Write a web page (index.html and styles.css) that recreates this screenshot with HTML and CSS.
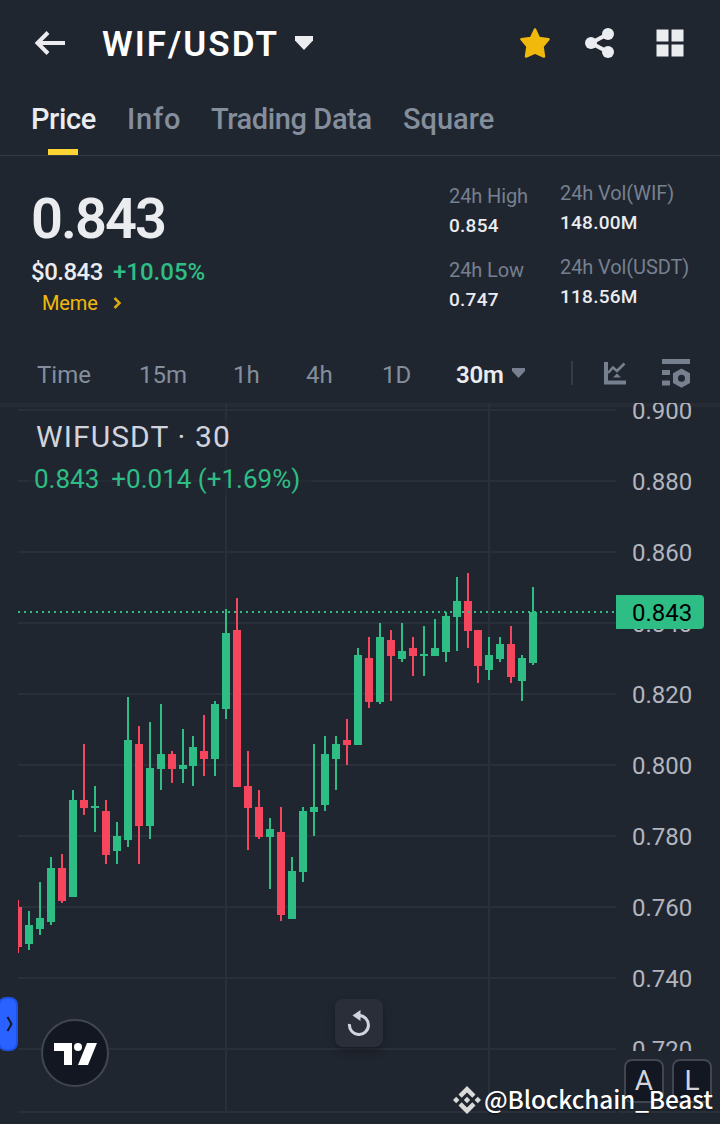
FILE: index.html
```html
<!DOCTYPE html>
<html lang="en">
<head>
    <meta charset="UTF-8">
    <meta name="viewport" content="width=device-width, initial-scale=1.0">
    <title>WIF/USDT</title>
    <link rel="stylesheet" href="styles.css">
</head>
<body>
    <header class="header">
        <svg class="back" width="32" height="26" viewBox="0 0 32 26">
            <path d="M31 13H4M14 2.500L3.500 13L14 23.500" fill="none" stroke="#eaecef" stroke-width="4"/>
        </svg>
        <h1 class="pair">WIF/USDT</h1>
        <svg class="pairCaret" width="18" height="14" viewBox="0 0 18 14"><path d="M0 0h18v4.500L9 14L0 4.500z" fill="#eaecef"/></svg>
        <div class="actions">
            <svg width="30" height="30" viewBox="0 0 30 30">
                <path d="M15 1.500L19 10L28.500 11.300L22.500 18.500L24 28.500L15 24.500L6 28.500L7.500 18.500L1.500 11.300L11 10z" fill="#f0b90b" stroke="#f0b90b" stroke-width="2.500" stroke-linejoin="round"/>
            </svg>
            <svg width="30" height="30" viewBox="0 0 30 30" fill="#eaecef">
                <path d="M23 6L6 15L23 24" fill="none" stroke="#eaecef" stroke-width="4"/>
                <circle cx="6" cy="15" r="6"/>
                <circle cx="23" cy="6" r="6"/>
                <circle cx="23" cy="24" r="6"/>
            </svg>
            <svg width="28" height="28" viewBox="0 0 28 28" fill="#eaecef">
                <path d="M.5.5h12v12h-12zM15.500.5h12v12h-12zM.5 15.500h12v12h-12zM15.500 15.500h12v12h-12z"/>
            </svg>
        </div>
    </header>

    <nav class="tabs">
        <a class="tab active tabPrice">Price</a>
        <a class="tab tabInfo">Info</a>
        <a class="tab tabData">Trading Data</a>
        <a class="tab tabSquare">Square</a>
    </nav>

    <section class="summary">
        <div class="priceBox">
            <div class="price">0.843</div>
            <div class="change"><span class="usd">$0.843</span><span class="percent">+10.05%</span></div>
            <div class="tag">Meme
                <svg width="9" height="12" viewBox="0 0 9 12"><path d="M1.500 1L6.500 6L1.500 11" fill="none" stroke="#d9a90f" stroke-width="2.500"/></svg>
            </div>
        </div>
        <dl class="stats">
            <dt>24h High</dt><dd>0.854</dd>
            <dt>24h Low</dt><dd>0.747</dd>
        </dl>
        <dl class="stats volume">
            <dt>24h Vol(WIF)</dt><dd>148.00M</dd>
            <dt>24h Vol(USDT)</dt><dd>118.56M</dd>
        </dl>
    </section>

    <div class="intervals">
        <span>Time</span>
        <span>15m</span>
        <span>1h</span>
        <span>4h</span>
        <span>1D</span>
        <span class="current">30m
            <svg width="13" height="10" viewBox="0 0 13 10"><path d="M0 0h13v3L6.500 10L0 3z" fill="#76808f"/></svg>
        </span>
        <i class="divider"></i>
        <svg class="tool" width="22" height="23" viewBox="0 0 22 23">
            <path d="M2 0V20.500H22" fill="none" stroke="#76808f" stroke-width="4"/>
            <path d="M4 11L9 5.500L13 9L20.500 1.500" fill="none" stroke="#76808f" stroke-width="2.600"/>
            <path d="M9 15.500L13 11.500L17 15.500z" fill="#76808f"/>
        </svg>
        <svg class="tool" width="28" height="29" viewBox="0 0 28 29" fill="#76808f">
            <path d="M0 0h28v5H0zM0 11h8v5H0zM0 21.500h8v5H0z"/>
            <path d="M19.500 9.500L28 14.200V24L19.500 28.800L11 24V14.200zM19.500 15.700a3.500 3.500 0 1 0 0 7a3.500 3.500 0 1 0 0-7z" fill-rule="evenodd"/>
        </svg>
    </div>

    <main class="chart">
        <svg class="plot" width="720" height="721" viewBox="0 403 720 721">
            <rect y="403" width="720" height="4" fill="#262b35"/>
            <clipPath id="pane"><rect x="18" y="403" width="598" height="709"/></clipPath>
            <clipPath id="axisPane"><rect x="616" y="403" width="104" height="648"/></clipPath>
            <g id="grid" fill="#2a303a"></g>
            <g id="axis" clip-path="url(#axisPane)"></g>
            <rect class="legendShade" x="26" y="418" width="286" height="78"/>
            <g id="candles" clip-path="url(#pane)"></g>
            <path d="M18 612H616" stroke="#2ebd85" stroke-width="2" stroke-dasharray="2 4"/>
            <path d="M616 595h84a4 4 0 0 1 4 4v26a4 4 0 0 1-4 4h-84z" fill="#2ebd85"/>
            <text class="axisText lastPrice" x="632" y="621">0.843</text>
        </svg>

        <div class="legend">
            <div class="symbol">WIFUSDT · 30</div>
            <div class="values"><span>0.843</span><span>+0.014 (+1.69%)</span></div>
        </div>

        <div class="handle">
            <svg width="8" height="16" viewBox="0 0 8 16"><path d="M1.500 1L5.500 8L1.500 15" fill="none" stroke="#131722" stroke-width="2"/></svg>
        </div>

        <div class="logo">
            <svg width="44" height="22" viewBox="0 0 44 22" fill="#fff">
                <path d="M0 0h18v22h-8V8H0zM33 0h10L34 22H24z"/>
                <circle cx="24" cy="4" r="4"/>
            </svg>
        </div>

        <div class="reset">
            <svg width="24" height="26" viewBox="0 0 24 26">
                <path d="M2.500 14A9.500 9.500 0 1 0 12 5.500" fill="none" stroke="#d1d4dc" stroke-width="3"/>
                <path d="M13.500 0V11L5.500 5.500z" fill="#d1d4dc"/>
            </svg>
        </div>

        <div class="scaleButtons">
            <div class="scaleButton">A</div>
            <div class="scaleButton">L</div>
        </div>

        <div class="watermark">
            <svg width="28" height="28" viewBox="0 0 28 28" fill="#d9d9d9">
                <path d="M14 0L22.500 8.500L19.300 11.700L14 6.400L8.700 11.700L5.500 8.500z"/>
                <path d="M14 28L22.500 19.500L19.300 16.300L14 21.600L8.700 16.300L5.500 19.500z"/>
                <path d="M3.200 10.800L6.400 14L3.200 17.200L0 14zM24.800 10.800L28 14L24.800 17.200L21.600 14zM14 10.800L17.200 14L14 17.200L10.800 14z"/>
            </svg>
            <span>@Blockchain_Beast</span>
        </div>
    </main>

    <script>
        // x, high, body top, body bottom, low, up
        const candles = [
            [18, 900, 907, 947, 953, 0], [29, 911, 925, 944, 950, 1], [40, 882, 918, 929, 935, 1],
            [51, 857, 868, 922, 925, 1], [62, 854, 868, 901, 903, 0], [73, 790, 800, 897, 897, 1],
            [84, 744, 800, 808, 815, 0], [95, 786, 806, 808, 832, 1], [106, 800, 811, 855, 864, 0],
            [117, 822, 836, 851, 864, 1], [128, 697, 740, 840, 847, 1], [139, 726, 744, 826, 864, 0],
            [150, 722, 768, 826, 839, 1], [161, 704, 754, 769, 790, 1], [172, 751, 754, 769, 783, 0],
            [183, 729, 765, 769, 783, 1], [193, 736, 747, 766, 786, 1], [204, 715, 751, 759, 776, 0],
            [215, 701, 704, 759, 776, 1], [226, 609, 633, 709, 719, 1], [237, 598, 630, 787, 787, 0],
            [248, 751, 786, 808, 850, 0], [259, 790, 807, 837, 839, 0], [270, 818, 829, 837, 889, 1],
            [281, 807, 832, 915, 921, 0], [292, 857, 871, 919, 919, 1], [303, 807, 811, 872, 882, 1],
            [314, 744, 807, 812, 836, 1], [325, 736, 754, 805, 811, 1], [336, 736, 744, 759, 790, 1],
            [347, 719, 740, 745, 765, 0], [358, 648, 655, 745, 745, 1], [369, 637, 658, 702, 708, 0],
            [380, 623, 637, 702, 704, 1], [391, 630, 640, 656, 701, 0], [402, 623, 651, 659, 662, 1],
            [413, 637, 648, 656, 676, 0], [424, 626, 654, 656, 676, 1], [435, 619, 648, 656, 656, 1],
            [446, 612, 616, 652, 662, 1], [457, 577, 601, 617, 651, 1], [468, 573, 601, 631, 648, 0],
            [478, 630, 630, 666, 683, 0], [489, 637, 655, 670, 680, 1], [500, 637, 644, 659, 662, 1],
            [511, 626, 644, 677, 683, 0], [522, 655, 658, 681, 701, 1], [533, 587, 612, 663, 665, 1]
        ];

        let grid = "";
        let axis = "";
        for (let i = 0; i < 10; i++) {
            let y = 410 + i * 71;
            grid += `<rect x="18" y="${y - 1}" width="598" height="2"/>`;
            axis += `<text class="axisText" x="632" y="${y + 9}">${(0.9 - i * 0.02).toFixed(3)}</text>`;
        }
        grid += `<rect x="225" y="403" width="2" height="708"/><rect x="488" y="403" width="2" height="708"/>`;
        grid += `<rect x="18" y="1111" width="598" height="2"/><rect x="618" y="1111" width="102" height="2"/>`;
        document.getElementById("grid").innerHTML = grid;
        document.getElementById("axis").innerHTML = axis;

        document.getElementById("candles").innerHTML = candles.map(([x, high, top, bottom, low, up]) =>
            `<path class="${up ? "up" : "down"}" d="M${x - 1} ${high}h2V${low}h-2zM${x - 4} ${top}h8V${bottom}h-8z"/>`
        ).join("");
    </script>
</body>
</html>
```
FILE: styles.css
```css
* {
    box-sizing: border-box;
}
body {
    margin: 0;
    width: 720px;
    height: 1124px;
    overflow: hidden;
    background-color: #202630;
    color: #eaecef;
    font-family: Roboto, "Liberation Sans", sans-serif;
}
svg {
    display: block;
    flex: none;
}

.header {
    display: flex;
    align-items: center;
    height: 87px;
    padding: 0 36px 2px 34px;
}
.pair {
    width: 176px;
    margin: 4px 17px 0 36px;
    color: #fff;
    font-size: 35px;
    font-weight: 600;
    letter-spacing: 2px;
    white-space: nowrap;
}
.actions {
    display: flex;
    align-items: center;
    gap: 35px;
    margin-left: auto;
}
.actions svg:last-child {
    margin-left: 6px;
}

.tabs {
    display: flex;
    gap: 31px;
    height: 69px;
    padding-left: 31px;
    border-bottom: 1px solid #333b47;
}
.tab {
    position: relative;
    line-height: 65px;
    color: #848e9c;
    font-size: 29px;
    font-weight: 500;
    white-space: nowrap;
}
.tabPrice {
    width: 65px;
    letter-spacing: -0.4px;
}
.tabInfo {
    width: 53px;
    letter-spacing: 0.8px;
}
.tabData {
    width: 161px;
    letter-spacing: -0.4px;
}
.tabSquare {
    width: 91px;
}
.tab.active {
    color: #eaecef;
}
.tab.active::after {
    content: '';
    position: absolute;
    left: 17px;
    bottom: 0;
    width: 30px;
    height: 6px;
    background-color: #fcd535;
}

.summary {
    display: flex;
    height: 190px;
    padding: 26px 0 0 31px;
}
.priceBox {
    width: 418px;
}
.price {
    height: 73px;
    line-height: 75px;
    font-size: 56px;
    font-weight: 600;
    letter-spacing: -2px;
}
.change {
    display: flex;
    gap: 10px;
    height: 34px;
    line-height: 34px;
    font-size: 24px;
    font-weight: 500;
}
.usd {
    width: 72px;
    letter-spacing: -0.5px;
}
.percent {
    color: #2ebd85;
}
.tag {
    display: flex;
    align-items: center;
    gap: 15px;
    height: 28px;
    padding-left: 11px;
    color: #f0b90b;
    font-size: 20px;
    letter-spacing: -0.1px;
}
.stats {
    width: 111px;
    margin: 0;
    white-space: nowrap;
}
.stats.volume {
    width: 150px;
    margin-top: -3px;
}
.stats dt {
    height: 28px;
    line-height: 28px;
    color: #76808f;
    font-size: 20px;
    letter-spacing: -0.1px;
}
.stats dd {
    height: 30px;
    margin: 0 0 16px;
    line-height: 32px;
    font-size: 19px;
    font-weight: 500;
    letter-spacing: 0.25px;
}

.intervals {
    display: grid;
    grid-template-columns: 102px 94px 73px 76px 74px 115px 33px 58px 28px;
    align-items: center;
    height: 57px;
    padding-left: 37px;
    color: #848e9c;
    font-size: 24px;
}
.current {
    display: flex;
    align-items: center;
    gap: 8px;
    color: #eaecef;
    font-weight: 600;
    letter-spacing: -0.2px;
}
.current svg {
    margin-top: -3px;
}
.tool {
    margin-top: -2px;
}
.divider {
    width: 2px;
    height: 24px;
    margin-top: -3px;
    background-color: #333b47;
}

.chart {
    position: relative;
    height: 721px;
}
.axisText {
    fill: #b2b5be;
    font-size: 24px;
}
.lastPrice {
    fill: #000;
}
.legendShade {
    fill: #202630;
    opacity: 0.5;
}
.up {
    fill: #2ebd85;
}
.down {
    fill: #f6465d;
}

.legend {
    position: absolute;
    left: 36px;
    top: 13px;
    white-space: nowrap;
}
.symbol {
    height: 42px;
    line-height: 42px;
    color: #d1d4dc;
    font-size: 30px;
    letter-spacing: 1.1px;
}
.values {
    display: flex;
    gap: 12px;
    height: 42px;
    margin-left: -2px;
    line-height: 42px;
    color: #2ebd85;
    font-size: 26px;
}

.handle {
    position: absolute;
    left: -2px;
    top: 594px;
    display: flex;
    align-items: center;
    justify-content: center;
    width: 20px;
    height: 54px;
    padding-left: 3px;
    border: 2px solid #1e53e5;
    border-radius: 8px;
    background-color: #2962ff;
}
.logo {
    position: absolute;
    left: 41px;
    top: 616px;
    display: flex;
    align-items: center;
    justify-content: center;
    width: 68px;
    height: 68px;
    padding: 2px 0 0 2px;
    border: 2px solid #434651;
    border-radius: 50%;
    background-color: #131722;
}
.reset {
    position: absolute;
    left: 335px;
    top: 596px;
    display: flex;
    align-items: center;
    justify-content: center;
    width: 48px;
    height: 48px;
    border-radius: 8px;
    background-color: #2a2e39;
    box-shadow: 0 4px 8px rgba(0, 0, 0, 0.3);
}
.scaleButtons {
    position: absolute;
    left: 624px;
    top: 656px;
    display: flex;
    gap: 8px;
}
.scaleButton {
    width: 40px;
    height: 44px;
    border: 2px solid #434651;
    border-radius: 8px;
    background-color: #131722;
    color: #d1d4dc;
    font-size: 28px;
    line-height: 40px;
    text-align: center;
}
.watermark {
    position: absolute;
    left: 453px;
    top: 679px;
    display: flex;
    align-items: center;
    gap: 3px;
    height: 36px;
    color: #fff;
    font-family: "Noto Sans CJK SC", sans-serif;
    font-size: 24.4px;
    font-weight: 500;
    line-height: 34px;
    letter-spacing: -0.1px;
    text-shadow: 0 1px 2px rgba(0, 0, 0, 0.6);
}
.watermark span {
    margin-top: -3px;
}
```
